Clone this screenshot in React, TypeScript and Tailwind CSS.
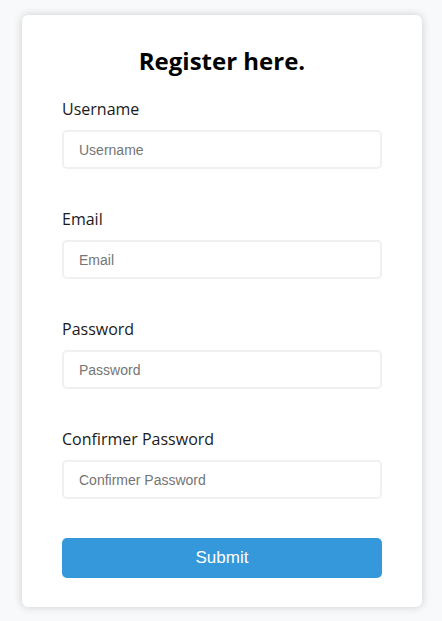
export default function App() {
  const fields = [
    { label: 'Username', type: 'text' },
    { label: 'Email', type: 'email' },
    { label: 'Password', type: 'password' },
    { label: 'Confirmer Password', type: 'password' },
  ]

  return (
    <div className="min-h-[621px] bg-[#f8f9fb] pt-[15px] pb-[14px]">
      <form
        className="ml-[22px] w-[400px] rounded-[6px] bg-white px-10 pt-[30px] pb-[29px] shadow-[0_0_8px_rgba(0,0,0,0.18)]"
        style={{ fontFamily: '"Open Sans", sans-serif' }}
        onSubmit={(e) => e.preventDefault()}
      >
        <h1 className="text-center text-[24px] font-bold leading-[32px] text-black">
          Register here.
        </h1>

        {fields.map((field, i) => (
          <div key={field.label} className={i === 0 ? 'mt-[20px]' : 'mt-[38px]'}>
            <label className="block text-[16px] leading-[24px] text-[#1a1a1a]">
              {field.label}
            </label>
            <input
              type={field.type}
              placeholder={field.label}
              className="mt-[9px] block h-[39px] w-full rounded-[5px] border-2 border-[#f0f0f0] bg-white px-[15px] text-[14px] text-[#333] outline-none placeholder:text-[#757575]"
              style={{ fontFamily: '"Liberation Sans", Arial, sans-serif' }}
            />
          </div>
        ))}

        <button
          type="submit"
          className="mt-[39px] block h-[40px] w-full rounded-[5px] bg-[#3498db] text-[17px] text-white"
          style={{ fontFamily: '"Liberation Sans", Arial, sans-serif' }}
        >
          Submit
        </button>
      </form>
    </div>
  )
}
